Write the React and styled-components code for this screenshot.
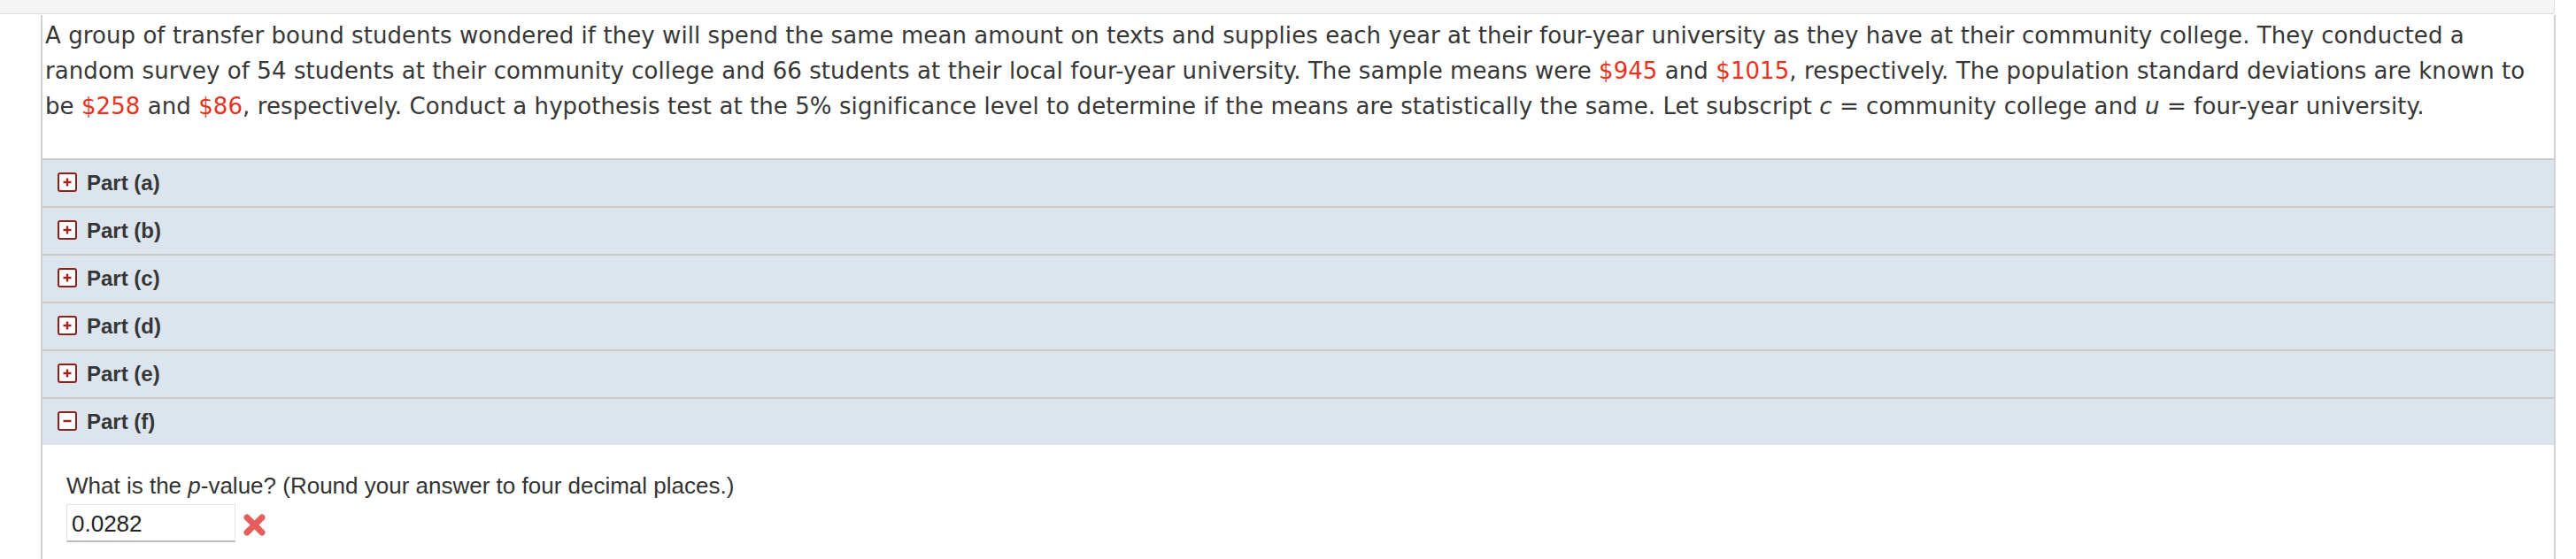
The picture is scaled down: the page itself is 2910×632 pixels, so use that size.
import React from 'react';
import styled, { createGlobalStyle } from 'styled-components';

const GlobalStyle = createGlobalStyle`
  html, body {
    margin: 0;
    padding: 0;
    background: #fff;
  }
  body {
    width: 2910px;
    height: 632px;
    overflow: hidden;
  }
`;

const Page = styled.div`
  display: flex;
  flex-direction: column;
  width: 2910px;
  height: 632px;
`;

const TopBand = styled.div`
  width: 2886px;
  height: 16px;
  flex: none;
  background: #f5f5f5;
  border-bottom: 1px solid #dedede;
  border-right: 1px solid #dedede;
  border-bottom-right-radius: 4px;
  box-sizing: border-box;
`;

const Panel = styled.div`
  flex: 1;
  margin-left: 46px;
  width: 2841px;
  box-sizing: border-box;
  border-left: 2px solid #d2d2d2;
  border-right: 2px solid #d2d2d2;
  margin-top: 1px;
`;

const Question = styled.p`
  margin: 3px 0 0;
  padding: 0 8px 0 3px;
  font-family: 'DejaVu Sans', Verdana, sans-serif;
  font-size: 26px;
  line-height: 40px;
  letter-spacing: 0.07px;
  color: #373737;

  em {
    font-style: italic;
  }
`;

const Red = styled.span`
  color: #e8321e;
`;

const Parts = styled.div`
  margin-top: 39px;
  display: flex;
  flex-direction: column;
`;

const PartRow = styled.div`
  display: flex;
  align-items: center;
  gap: 11px;
  height: 54px;
  box-sizing: border-box;
  padding-left: 17px;
  border-top: 2px solid #cacaca;
  background: #dce5ee;
  font-family: 'Liberation Sans', Arial, sans-serif;
  font-weight: bold;
  font-size: 24px;
  color: #363636;
`;

const Toggle = styled.span`
  display: flex;
  align-items: center;
  justify-content: center;
  width: 22px;
  height: 22px;
  box-sizing: border-box;
  border: 2px solid #8a211d;
  border-radius: 3px;
  background: #fff;
  margin-top: -2px;
`;

const Body = styled.div`
  padding: 31px 0 0 27px;
  font-family: 'Liberation Sans', Arial, sans-serif;
  font-size: 26px;
  color: #333;
`;

const Prompt = styled.div`
  line-height: 30px;
`;

const AnswerLine = styled.div`
  display: flex;
  align-items: center;
  gap: 8px;
  margin-top: 6px;
`;

const AnswerBox = styled.div`
  width: 191px;
  height: 43px;
  box-sizing: border-box;
  border: 1px solid #e4e4e4;
  border-bottom: 2px solid #bdbdbd;
  padding: 4px 0 0 5px;
  font-size: 26px;
  line-height: 34px;
  color: #222;
`;

const CrossMark = () => (
  <svg width="27" height="27" viewBox="0 0 27 27" style={{ marginTop: 4 }}>
    <g stroke="#e4504f" strokeWidth="7" strokeLinecap="round" opacity="0.92">
      <line x1="5" y1="5" x2="22" y2="22" />
      <line x1="22" y1="5" x2="5" y2="22" />
    </g>
  </svg>
);

const ToggleIcon = ({ open }) => (
  <Toggle>
    <svg width="12" height="12" viewBox="0 0 12 12">
      <rect x="1.5" y="4.8" width="9" height="2.4" fill="#a3241f" />
      {!open && <rect x="4.8" y="1.5" width="2.4" height="9" fill="#a3241f" />}
    </svg>
  </Toggle>
);

const parts = ['a', 'b', 'c', 'd', 'e', 'f'];

export default function App() {
  return (
    <Page>
      <GlobalStyle />
      <TopBand />
      <Panel>
        <Question>
          A group of transfer bound students wondered if they will spend the same mean amount on texts
          and supplies each year at their four-year university as they have at their community college.
          They conducted a random survey of 54 students at their community college and 66 students at
          their local four-year university. The sample means were <Red>$945</Red> and <Red>$1015</Red>,
          respectively. The population standard deviations are known to be <Red>$258</Red> and{' '}
          <Red>$86</Red>, respectively. Conduct a hypothesis test at the 5% significance level to
          determine if the means are statistically the same. Let subscript <em>c</em> = community
          college and <em>u</em> = four-year university.
        </Question>
        <Parts>
          {parts.map((p) => (
            <PartRow key={p}>
              <ToggleIcon open={p === 'f'} />
              <span>Part ({p})</span>
            </PartRow>
          ))}
        </Parts>
        <Body>
          <Prompt>
            What is the <em>p</em>-value? (Round your answer to four decimal places.)
          </Prompt>
          <AnswerLine>
            <AnswerBox>0.0282</AnswerBox>
            <CrossMark />
          </AnswerLine>
        </Body>
      </Panel>
    </Page>
  );
}
